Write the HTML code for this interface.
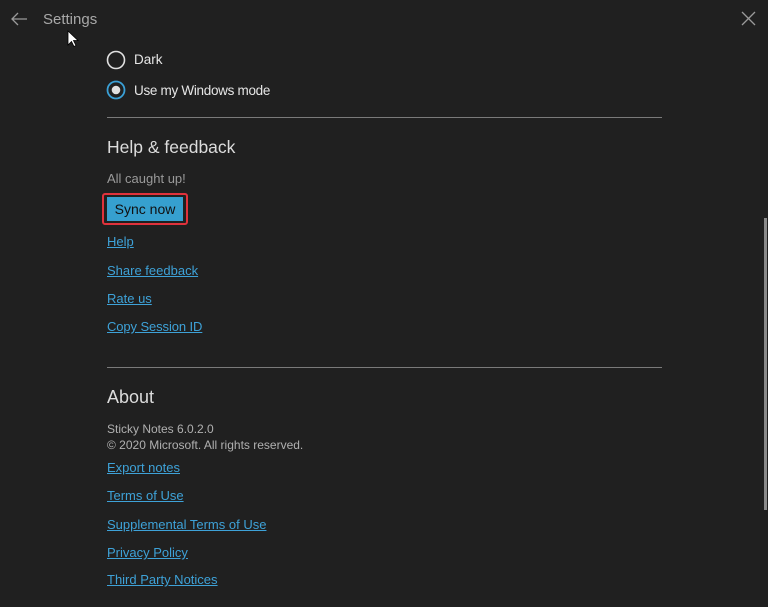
<!DOCTYPE html>
<html><head><style>
body{margin:0;width:768px;height:607px;background:#202020;font-family:"Liberation Sans",sans-serif;position:relative;overflow:hidden;color:#e6e6e6}
.a{position:absolute;white-space:nowrap}
.l{position:absolute;left:107px;font-size:13px;color:#3ea2d8;text-decoration:underline}
.hr{position:absolute;left:107px;width:555px;height:1px;background:#7a7a7a}
</style></head><body>
<svg class="a" style="left:10px;top:11px" width="18" height="16"><path d="M17 8H2M8 2L2 8l6 6" stroke="#9a9a9a" stroke-width="1.3" fill="none"/></svg>
<div class="a" style="left:43px;top:11px;font-size:15px;color:#a8a8a8">Settings</div>
<svg class="a" style="left:67px;top:30px" width="12" height="18"><path d="M1 1v14l3.5-3.5 2.5 5 2-1-2.5-5H11z" fill="#fff" stroke="#000" stroke-width=".8"/></svg>
<svg class="a" style="left:741px;top:11px" width="15" height="15"><path d="M1 1l13 13M14 1L1 14" stroke="#9a9a9a" stroke-width="1.3"/></svg>
<svg class="a" style="left:106px;top:50px" width="20" height="20"><circle cx="10" cy="10" r="8.5" stroke="#e0e0e0" stroke-width="1.6" fill="none"/></svg>
<div class="a" style="left:134px;top:52px;font-size:13.5px">Dark</div>
<svg class="a" style="left:106px;top:80px" width="20" height="20"><circle cx="10" cy="10" r="8.5" stroke="#3aa0d6" stroke-width="1.8" fill="none"/><circle cx="10" cy="10" r="4.3" fill="#e0e0e0"/></svg>
<div class="a" style="left:134px;top:83px;font-size:13.5px;letter-spacing:-.3px">Use my Windows mode</div>
<div class="hr" style="top:117px"></div>
<div class="a" style="left:107px;top:137px;font-size:17.5px;color:#dcdcdc">Help &amp; feedback</div>
<div class="a" style="left:107px;top:171px;font-size:13px;color:#9a9a9a">All caught up!</div>
<div class="a" style="left:102px;top:193px;width:82px;height:28px;border:2px solid #e0323c;border-radius:3px"></div>
<div class="a" style="left:107px;top:197px;width:76px;height:24px;background:#36a0cf;color:#111;font-size:14px;text-align:center;line-height:24px">Sync now</div>
<div class="l" style="top:234px">Help</div>
<div class="l" style="top:263px">Share feedback</div>
<div class="l" style="top:291px">Rate us</div>
<div class="l" style="top:319px;letter-spacing:-.1px">Copy Session ID</div>
<div class="hr" style="top:367px"></div>
<div class="a" style="left:107px;top:387px;font-size:18px;color:#dcdcdc">About</div>
<div class="a" style="left:107px;top:421px;font-size:12px;color:#b0b0b0;line-height:16px">Sticky Notes 6.0.2.0<br>© 2020 Microsoft. All rights reserved.</div>
<div class="l" style="top:460px">Export notes</div>
<div class="l" style="top:488px">Terms of Use</div>
<div class="l" style="top:517px">Supplemental Terms of Use</div>
<div class="l" style="top:545px">Privacy Policy</div>
<div class="l" style="top:572px">Third Party Notices</div>
<div class="a" style="left:764px;top:218px;width:3px;height:292px;background:#8a8a8a"></div>
</body></html>
